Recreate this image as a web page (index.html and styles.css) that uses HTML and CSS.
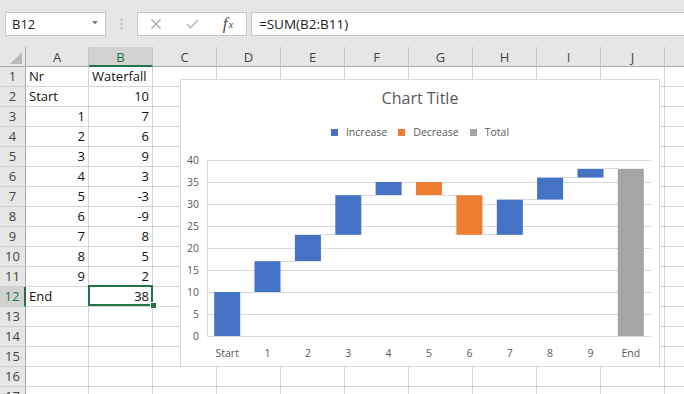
FILE: index.html
```html
<!DOCTYPE html>
<html>
<head>
<meta charset="utf-8">
<link rel="stylesheet" href="styles.css">
</head>
<body>
<div class="fbar">
  <div class="namebox"><span>B12</span><svg class="caret" width="6" height="4" viewBox="0 0 6 4"><path d="M0 0H6L3 3.5Z" fill="#7a7a7a"/></svg></div>
  <div class="grip"><svg width="3" height="12" viewBox="0 0 3 12"><circle cx="1.5" cy="1.5" r="1.1" fill="#b4b4b4"/><circle cx="1.5" cy="6" r="1.1" fill="#b4b4b4"/><circle cx="1.5" cy="10.5" r="1.1" fill="#b4b4b4"/></svg></div>
  <div class="fbtns">
    <span class="fb"><svg width="10" height="10" viewBox="0 0 10 10"><path d="M0.5 0.5L9.5 9.5M9.5 0.5L0.5 9.5" stroke="#a8a8a8" stroke-width="1.2"/></svg></span>
    <span class="fb"><svg width="13" height="10" viewBox="0 0 13 10"><path d="M0.8 5.2L4.6 8.8L12.2 0.8" stroke="#b4b4b4" stroke-width="1.4" fill="none"/></svg></span>
    <span class="fb fx"><i>f</i><sub>x</sub></span>
  </div>
  <div class="finput">=SUM(B2:B11)</div>
</div>

<div class="sheet-wrap">
  <div class="sheet">
    <div class="row hdr"><div class="corner"><svg width="26" height="20" viewBox="0 0 26 20"><path d="M10 17H22V5Z" fill="#b8b8b8"/></svg></div><div class="ch a">A</div><div class="ch on">B</div><div class="ch">C</div><div class="ch">D</div><div class="ch">E</div><div class="ch">F</div><div class="ch">G</div><div class="ch">H</div><div class="ch">I</div><div class="ch">J</div><div class="ch"></div></div>
    <div class="row"><div class="rh">1</div><div class="c a">Nr</div><div class="c">Waterfall</div><div class="c"></div><div class="c"></div><div class="c"></div><div class="c"></div><div class="c"></div><div class="c"></div><div class="c"></div><div class="c"></div><div class="c"></div></div>
    <div class="row"><div class="rh">2</div><div class="c a">Start</div><div class="c num">10</div><div class="c"></div><div class="c"></div><div class="c"></div><div class="c"></div><div class="c"></div><div class="c"></div><div class="c"></div><div class="c"></div><div class="c"></div></div>
    <div class="row"><div class="rh">3</div><div class="c a num">1</div><div class="c num">7</div><div class="c"></div><div class="c"></div><div class="c"></div><div class="c"></div><div class="c"></div><div class="c"></div><div class="c"></div><div class="c"></div><div class="c"></div></div>
    <div class="row"><div class="rh">4</div><div class="c a num">2</div><div class="c num">6</div><div class="c"></div><div class="c"></div><div class="c"></div><div class="c"></div><div class="c"></div><div class="c"></div><div class="c"></div><div class="c"></div><div class="c"></div></div>
    <div class="row"><div class="rh">5</div><div class="c a num">3</div><div class="c num">9</div><div class="c"></div><div class="c"></div><div class="c"></div><div class="c"></div><div class="c"></div><div class="c"></div><div class="c"></div><div class="c"></div><div class="c"></div></div>
    <div class="row"><div class="rh">6</div><div class="c a num">4</div><div class="c num">3</div><div class="c"></div><div class="c"></div><div class="c"></div><div class="c"></div><div class="c"></div><div class="c"></div><div class="c"></div><div class="c"></div><div class="c"></div></div>
    <div class="row"><div class="rh">7</div><div class="c a num">5</div><div class="c num">-3</div><div class="c"></div><div class="c"></div><div class="c"></div><div class="c"></div><div class="c"></div><div class="c"></div><div class="c"></div><div class="c"></div><div class="c"></div></div>
    <div class="row"><div class="rh">8</div><div class="c a num">6</div><div class="c num">-9</div><div class="c"></div><div class="c"></div><div class="c"></div><div class="c"></div><div class="c"></div><div class="c"></div><div class="c"></div><div class="c"></div><div class="c"></div></div>
    <div class="row"><div class="rh">9</div><div class="c a num">7</div><div class="c num">8</div><div class="c"></div><div class="c"></div><div class="c"></div><div class="c"></div><div class="c"></div><div class="c"></div><div class="c"></div><div class="c"></div><div class="c"></div></div>
    <div class="row"><div class="rh">10</div><div class="c a num">8</div><div class="c num">5</div><div class="c"></div><div class="c"></div><div class="c"></div><div class="c"></div><div class="c"></div><div class="c"></div><div class="c"></div><div class="c"></div><div class="c"></div></div>
    <div class="row"><div class="rh">11</div><div class="c a num">9</div><div class="c num">2</div><div class="c"></div><div class="c"></div><div class="c"></div><div class="c"></div><div class="c"></div><div class="c"></div><div class="c"></div><div class="c"></div><div class="c"></div></div>
    <div class="row"><div class="rh on">12</div><div class="c a">End</div><div class="c num sel">38</div><div class="c"></div><div class="c"></div><div class="c"></div><div class="c"></div><div class="c"></div><div class="c"></div><div class="c"></div><div class="c"></div><div class="c"></div></div>
    <div class="row"><div class="rh">13</div><div class="c a"></div><div class="c"></div><div class="c"></div><div class="c"></div><div class="c"></div><div class="c"></div><div class="c"></div><div class="c"></div><div class="c"></div><div class="c"></div><div class="c"></div></div>
    <div class="row"><div class="rh">14</div><div class="c a"></div><div class="c"></div><div class="c"></div><div class="c"></div><div class="c"></div><div class="c"></div><div class="c"></div><div class="c"></div><div class="c"></div><div class="c"></div><div class="c"></div></div>
    <div class="row"><div class="rh">15</div><div class="c a"></div><div class="c"></div><div class="c"></div><div class="c"></div><div class="c"></div><div class="c"></div><div class="c"></div><div class="c"></div><div class="c"></div><div class="c"></div><div class="c"></div></div>
    <div class="row"><div class="rh">16</div><div class="c a"></div><div class="c"></div><div class="c"></div><div class="c"></div><div class="c"></div><div class="c"></div><div class="c"></div><div class="c"></div><div class="c"></div><div class="c"></div><div class="c"></div></div>
    <div class="row"><div class="rh">17</div><div class="c a"></div><div class="c"></div><div class="c"></div><div class="c"></div><div class="c"></div><div class="c"></div><div class="c"></div><div class="c"></div><div class="c"></div><div class="c"></div><div class="c"></div></div>
  </div>

  <div class="chart">
    <div class="chart-title">Chart Title</div>
    <div class="legend">
      <span class="item"><i class="sw inc"></i>Increase</span>
      <span class="item"><i class="sw dec"></i>Decrease</span>
      <span class="item"><i class="sw tot"></i>Total</span>
    </div>
    <svg class="plot" width="478" height="227" viewBox="1 60 478 227">
      <g stroke="#d9d9d9" stroke-width="1">
        <path d="M27 81.5H471M27 103.5H471M27 125.5H471M27 147.5H471M27 169.5H471M27 191.5H471M27 213.5H471M27 235.5H471M27 257.5H471"/>
        <path d="M27.5 81V258"/>
        <path d="M60.2 213.5H74.5M100.5 182.5H114.9M140.9 155.5H155.3M181.3 116.5H195.6M221.6 103.5H236M262 116.5H276.4M302.4 155.5H316.8M342.8 120.5H357.1M383.1 98.5H397.5M423.5 89.5H437.8"/>
      </g>
      <g fill="#4472c4">
        <rect x="34.2" y="213" width="26" height="44"/>
        <rect x="74.5" y="182.2" width="26" height="30.8"/>
        <rect x="114.9" y="155.8" width="26" height="26.4"/>
        <rect x="155.3" y="116.2" width="26" height="39.6"/>
        <rect x="195.6" y="103" width="26" height="13.2"/>
        <rect x="316.8" y="120.6" width="26" height="35.2"/>
        <rect x="357.1" y="98.6" width="26" height="22"/>
        <rect x="397.5" y="89.8" width="26" height="8.8"/>
      </g>
      <g fill="#ed7d31">
        <rect x="236" y="103" width="26" height="13.2"/>
        <rect x="276.4" y="116.2" width="26" height="39.6"/>
      </g>
      <rect x="437.8" y="89.8" width="26" height="167.2" fill="#a5a5a5"/>
      <g class="ylab" text-anchor="end">
        <text x="19" y="85">40</text>
        <text x="19" y="107">35</text>
        <text x="19" y="129">30</text>
        <text x="19" y="151">25</text>
        <text x="19" y="173">20</text>
        <text x="19" y="195">15</text>
        <text x="19" y="217">10</text>
        <text x="19" y="239">5</text>
        <text x="19" y="261">0</text>
      </g>
      <g class="xlab" text-anchor="middle">
        <text x="47.2" y="278">Start</text>
        <text x="87.5" y="278">1</text>
        <text x="127.9" y="278">2</text>
        <text x="168.3" y="278">3</text>
        <text x="208.6" y="278">4</text>
        <text x="249" y="278">5</text>
        <text x="289.4" y="278">6</text>
        <text x="329.8" y="278">7</text>
        <text x="370.1" y="278">8</text>
        <text x="410.5" y="278">9</text>
        <text x="450.8" y="278">End</text>
      </g>
    </svg>
  </div>
</div>
</body>
</html>
```

FILE: styles.css
```css
html, body {
  margin: 0;
  padding: 0;
}
body {
  width: 684px;
  height: 394px;
  overflow: hidden;
  background: #ffffff;
  font-family: "Open Sans", "DejaVu Sans", sans-serif;
}

/* formula bar */
.fbar {
  display: flex;
  align-items: flex-start;
  height: 47px;
  box-sizing: border-box;
  padding: 12px 0 0 5px;
  background: #e6e6e6;
  overflow: hidden;
}
.namebox {
  flex: none;
  width: 101px;
  height: 24px;
  box-sizing: border-box;
  border: 1px solid #c6c6c6;
  background: #ffffff;
  display: flex;
  align-items: center;
  justify-content: space-between;
  padding: 0 7px 0 6px;
  font-size: 13px;
  color: #222222;
}
.caret {
  display: block;
  margin-top: -3px;
}
.grip {
  flex: none;
  width: 31px;
  height: 24px;
  display: flex;
  align-items: center;
  justify-content: center;
}
.grip svg {
  display: block;
}
.fbtns {
  flex: none;
  width: 110px;
  height: 24px;
  box-sizing: border-box;
  border: 1px solid #c6c6c6;
  background: #ffffff;
  display: flex;
  align-items: center;
}
.fb {
  width: 36px;
  height: 22px;
  display: flex;
  align-items: center;
  justify-content: center;
}
.fb svg {
  display: block;
}
.fx {
  font-family: "Liberation Serif", serif;
  color: #4a4a4a;
  font-size: 17px;
  line-height: 22px;
}
.fx i {
  font-style: italic;
}
.fx sub {
  font-style: italic;
  font-size: 11px;
  vertical-align: -1px;
  margin-left: 1px;
}
.finput {
  flex: 1;
  margin-left: 4px;
  height: 24px;
  box-sizing: border-box;
  border: 1px solid #c6c6c6;
  border-right: none;
  background: #ffffff;
  padding-left: 7px;
  font-size: 13.5px;
  line-height: 22px;
  color: #222222;
}

/* sheet */
.sheet-wrap {
  position: relative;
  height: 347px;
  overflow: hidden;
}
.row {
  display: flex;
  height: 20px;
}
.row > div {
  flex: none;
  box-sizing: border-box;
  height: 20px;
}
.corner {
  width: 26px;
  background: #e6e6e6;
  border-right: 1px solid #ababab;
  border-bottom: 1px solid #ababab;
}
.corner svg {
  display: block;
}
.ch {
  width: 64px;
  background: #e6e6e6;
  border-right: 1px solid #c6c6c6;
  border-bottom: 1px solid #ababab;
  text-align: center;
  font-size: 13px;
  line-height: 20px;
  color: #444444;
}
.ch.a {
  width: 63px;
}
.ch.on {
  background: #d2d2d2;
  color: #217346;
  border-bottom: 2px solid #217346;
}
.rh {
  width: 26px;
  background: #e6e6e6;
  border-right: 1px solid #ababab;
  border-bottom: 1px solid #cfcfcf;
  text-align: center;
  font-size: 13px;
  line-height: 19px;
  color: #444444;
}
.rh.on {
  background: #d2d2d2;
  color: #217346;
  border-right: 2px solid #217346;
}
.c {
  width: 64px;
  border-right: 1px solid #d4d4d4;
  border-bottom: 1px solid #d4d4d4;
  padding: 0 3px 0 3px;
  font-size: 13px;
  line-height: 19px;
  color: #111111;
  white-space: nowrap;
  overflow: hidden;
}
.c.a {
  width: 63px;
}
.num {
  text-align: right;
}
.c.sel {
  position: relative;
  overflow: visible;
}
.c.sel::before {
  content: "";
  position: absolute;
  left: -1px;
  top: -2px;
  right: -1px;
  bottom: 0;
  border: 2px solid #217346;
}
.c.sel::after {
  content: "";
  position: absolute;
  left: 62px;
  top: 16px;
  width: 5px;
  height: 5px;
  background: #217346;
  box-shadow: 0 0 0 1px #ffffff;
}

/* chart */
.chart {
  position: absolute;
  left: 180px;
  top: 32px;
  width: 480px;
  height: 288px;
  box-sizing: border-box;
  border: 1px solid #d9d9d9;
  background: #ffffff;
  color: #595959;
}
.chart-title {
  padding-top: 6px;
  height: 24px;
  line-height: 24px;
  text-align: center;
  font-size: 16px;
}
.legend {
  margin-top: 15px;
  height: 14px;
  display: flex;
  justify-content: center;
  gap: 11px;
  font-size: 10.5px;
  line-height: 14px;
}
.item {
  display: flex;
  align-items: center;
  gap: 8px;
}
.sw {
  display: block;
  width: 7px;
  height: 7px;
}
.sw.inc { background: #4472c4; }
.sw.dec { background: #ed7d31; }
.sw.tot { background: #a5a5a5; }
.plot {
  display: block;
}
.plot text {
  font-family: "Open Sans", "DejaVu Sans", sans-serif;
  font-size: 10.5px;
  fill: #595959;
}
```
